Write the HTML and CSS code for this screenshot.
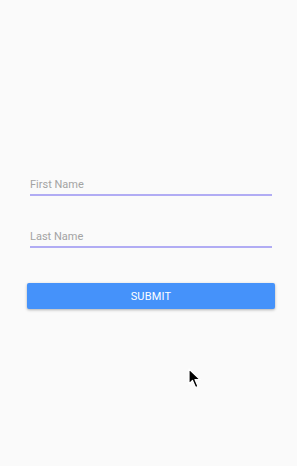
FILE: index.html
```html
<!DOCTYPE html>
<html lang="en">
<head>
    <meta charset="UTF-8">
    <meta name="viewport" content="width=device-width, initial-scale=1.0">
    <title>Form</title>
    <link rel="stylesheet" href="styles.css">
</head>
<body>

    <div class="form">
        <div class="field">
            <input type="text" placeholder="First Name">
        </div>
        <div class="field">
            <input type="text" placeholder="Last Name">
        </div>
        <button class="submit">SUBMIT</button>
    </div>

    <svg class="cursor" width="14" height="22" viewBox="0 0 14 22">
        <path d="M1 1 L1 16 L4.5 12.5 L7.5 19.5 L10 18.5 L7 11.5 L12 11.5 Z" fill="#000" stroke="#fff" stroke-width="1.2" stroke-linejoin="round"/>
    </svg>

</body>
</html>
```

FILE: styles.css
```css
body {
    font-family: Roboto, "Noto Sans", sans-serif;
    margin: 0;
    padding: 0;
    background-color: #fafafa;
    height: 466px;
    position: relative;
    overflow: hidden;
}

.form {
    padding-top: 177px;
    padding-left: 5px;
    display: flex;
    flex-direction: column;
    align-items: center;
}

.field {
    width: 242px;
    margin-bottom: 33px;
}

.field input {
    display: block;
    width: 100%;
    box-sizing: border-box;
    border: none;
    border-bottom: 2px solid #b1acf4;
    background: transparent;
    font-family: inherit;
    font-size: 11px;
    color: #333;
    padding: 0 0 3px 0;
    height: 19px;
    outline: none;
}

.field input::placeholder {
    color: #a3a3a3;
}

.submit {
    margin-top: 2px;
    width: 248px;
    height: 26px;
    border: none;
    border-radius: 2px;
    background-color: #4592fa;
    color: #fff;
    font-family: inherit;
    font-size: 11px;
    letter-spacing: 0.2px;
    box-shadow: 0 1px 3px rgba(0, 0, 0, 0.3);
}

.cursor {
    position: absolute;
    left: 188px;
    top: 368px;
}
```
